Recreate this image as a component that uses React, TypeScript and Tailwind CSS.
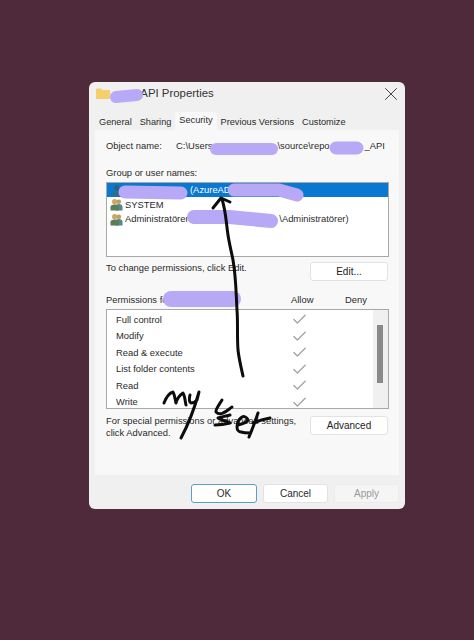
import { Check, X } from "lucide-react";

const permissions = ["Full control", "Modify", "Read & execute", "List folder contents", "Read", "Write"];
const tabs = ["General", "Sharing", "Security", "Previous Versions", "Customize"];

function UserIcon({ single }: { single?: boolean }) {
  return (
    <svg width="13" height="13" viewBox="0 0 14 13" className="shrink-0">
      {!single && <circle cx="9.5" cy="3.5" r="2.5" fill="#c79a5b" />}
      {!single && <path d="M6 13V9q0-3 3.5-3T13.5 9v4z" fill="#4f8a8f" />}
      <circle cx="5" cy="3.5" r="2.8" fill={single ? "#2f5f7a" : "#d0a56a"} />
      <path d="M0.5 13V9.500q0-3 4.500-3t4.500 3V13z" fill={single ? "#2a6f8f" : "#5a7f58"} />
    </svg>
  );
}

function WinButton({ label, className }: { label: string; className?: string }) {
  return (
    <button className={`h-[19px] w-[78px] rounded-[3px] border border-[#e2e2e2] bg-white text-[10px] text-[#222] ${className ?? ""}`}>
      {label}
    </button>
  );
}

export default function App() {
  return (
    <div className="flex h-[640px] w-[474px] items-start bg-[#4f2a3a] pl-[89px] pt-[82px] font-['Liberation_Sans',sans-serif]">
      <div className="relative flex h-[427px] w-[316px] flex-col rounded-[6px] bg-[#f0f0f0] text-[#2a2a2a]">
        {/* Title bar */}
        <div className="flex h-[30px] items-center pb-[6px] pl-[7px] pr-[3px]">
          <svg width="14" height="11" viewBox="0 0 14 11" className="-mt-[2px] shrink-0">
            <path d="M0 1.500q0-1 1-1h4l1.500 1.500H13q1 0 1 1V10q0 1-1 1H1q-1 0-1-1z" fill="#f5cf6e" />
          </svg>
          <span className="ml-[24px] text-[11.4px] leading-none text-[#333]">_API Properties</span>
          <X className="ml-auto text-[#222]" size={22} strokeWidth={0.9} />
        </div>

        {/* Tabs */}
        <div className="flex h-[18px] items-end pl-[6px] text-[9.2px] leading-none">
          {tabs.map((tab) => (
            <span
              key={tab}
              className={
                tab === "Security"
                  ? "flex h-[18px] items-center rounded-t-[2px] bg-[#f8f8f8] px-[4px] pb-[1px]"
                  : "flex h-[17px] items-center px-[4px] pt-[2px]"
              }
            >
              {tab}
            </span>
          ))}
        </div>

        {/* Security panel */}
        <div className="mx-[6px] flex h-[345px] flex-col bg-[#f8f8f8] pl-[11px] pr-[10px] text-[9.4px] leading-none">
          <div className="mt-[11px] flex h-[10px] items-center justify-between">
            <span>Object name:</span>
            <span className="w-[213px] whitespace-nowrap">
              C:\Users<span className="inline-block w-[65px]" />\source\repo<span className="inline-block w-[35px]" />_API
            </span>
          </div>
          <div className="mt-[17px] h-[10px]">Group or user names:</div>

          <div className="mt-[4px] h-[75px] border border-[#a8a8a8] bg-white">
            <div className="flex h-[14px] items-center gap-[2px] bg-[#0a78d0] pl-[5px] text-white">
              <UserIcon single />
              <span className="ml-[63px]">(AzureAD\</span>
            </div>
            <div className="flex h-[15px] items-center gap-[2px] pl-[3px]">
              <UserIcon />
              <span>SYSTEM</span>
            </div>
            <div className="flex h-[14px] items-center gap-[2px] pl-[3px]">
              <UserIcon />
              <span className="whitespace-nowrap">
                Administratörer (<span className="inline-block w-[85px]" />\Administratörer)
              </span>
            </div>
          </div>

          <div className="mt-[5px] flex h-[20px] items-start justify-between pr-[1px]">
            <span className="mt-[1px]">To change permissions, click Edit.</span>
            <WinButton label="Edit..." />
          </div>

          <div className="mt-[13px] flex h-[10px]">
            <span className="w-[185px]">Permissions for</span>
            <span className="w-[54px]">Allow</span>
            <span>Deny</span>
          </div>

          <div className="mt-[4px] flex h-[100px] border border-[#a8a8a8] bg-white">
            <div className="flex-1 overflow-hidden pl-[9px] pt-[1px]">
              {permissions.map((name) => (
                <div key={name} className="flex h-[16.500px] items-center">
                  <span className="w-[175px]">{name}</span>
                  <Check size={17} strokeWidth={1.8} className="mt-[1px] text-[#a2a2a2]" />
                </div>
              ))}
            </div>
            <div className="w-[15px] bg-[#f0f0f0] pl-[4px] pt-[15px]">
              <div className="h-[58px] w-[6px] bg-[#8a8a8a]" />
            </div>
          </div>

          <div className="mt-[7px] flex items-start justify-between pr-[1px]">
            <span className="-mt-[1px] leading-[12px]">
              For special permissions or advanced settings,
              <br />
              click Advanced.
            </span>
            <WinButton label="Advanced" />
          </div>
        </div>

        {/* Footer */}
        <div className="mt-[9px] flex justify-end gap-[6px] pr-[6px]">
          <button className="h-[19px] w-[66px] rounded-[3px] border border-[#5f9fc4] bg-white text-[10px]">OK</button>
          <button className="h-[19px] w-[65px] rounded-[3px] border border-[#e2e2e2] bg-white text-[10px]">Cancel</button>
          <button className="h-[19px] w-[65px] rounded-[3px] border border-[#ececec] bg-[#f5f5f5] text-[10px] text-[#999]">Apply</button>
        </div>

        {/* Redaction blobs and hand drawn annotation, in dialog coordinates */}
        <svg width="316" height="427" viewBox="0 0 316 427" className="pointer-events-none absolute left-0 top-0" fill="none" strokeLinecap="round" strokeLinejoin="round">
          <g stroke="#b8a9f6">
            <path d="M27 15L48 13" strokeWidth="12" />
            <path d="M127 67H183" strokeWidth="12" />
            <path d="M247 66H268" strokeWidth="13" />
            <path d="M36 110L92 111" strokeWidth="13" />
            <path d="M145 108L190 108L208 113" strokeWidth="13" />
            <path d="M105 135L140 135L182 139" strokeWidth="14" />
            <path d="M82 217H144" strokeWidth="16" />
          </g>
          <g stroke="#0c0c0c" strokeWidth="3">
            <path d="M154 294C152 285 150 277 149 268C148 255 149 240 148 228C147 210 147 195 144 178C142 168 140 160 139 153C137 140 137 130 133 117" />
            <path d="M124 126L132 116L141 120" />
            <path d="M75 321C77 316 80 311 84 310C86 313 86 318 87 321C88 317 91 313 94 311C96 314 96 319 97 323" />
            <path d="M101 313C100 317 100 320 102 321C104 321 106 320 108 318L110 310C105 328 99 343 92 356" />
            <path d="M133 318C130 323 126 328 127 330C129 332 132 332 134 331C137 330 140 327 143 325" />
            <path d="M141 333C137 334 132 335 129 336C132 338 137 339 141 341C137 342 131 343 126 343" />
            <path d="M149 343C153 342 158 340 159 338C158 335 155 334 153 335C150 337 148 341 148 345C148 348 150 350 152 350C155 351 158 351 161 351" />
            <path d="M169 331C166 340 163 348 160 355M164 341C169 339 175 337 181 336" />
          </g>
        </svg>
      </div>
    </div>
  );
}
